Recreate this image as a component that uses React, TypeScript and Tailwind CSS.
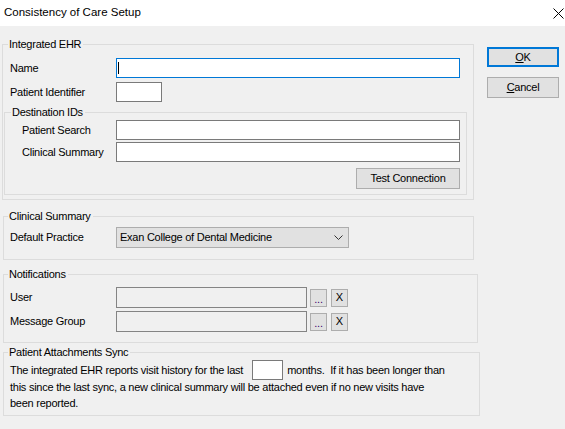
import React from "react";

const Btn = ({ children, className = "" }: { children: React.ReactNode; className?: string }) => (
  <div className={`flex items-center justify-center bg-[#e1e1e1] border border-[#adadad] ${className}`}>{children}</div>
);

export default function App() {
  return (
    <div className="w-[565px] h-[429px] bg-[#f0f0f0] overflow-hidden text-black text-[11px] tracking-[-0.25px] font-['Liberation_Sans',Arial,sans-serif]">
      {/* Title bar */}
      <div className="h-[26px] bg-white flex items-center justify-between">
        <span className="pl-[4px] text-[11.5px] tracking-normal">Consistency of Care Setup</span>
        <svg width="11" height="11" viewBox="0 0 11 11" className="mr-[1px]">
          <path d="M0.5 0.5 L10.5 10.5 M10.5 0.5 L0.5 10.5" stroke="#000" strokeWidth="1" fill="none" />
        </svg>
      </div>

      <div className="flex">
        {/* Left column */}
        <div className="w-[480px] flex flex-col">
          {/* Integrated EHR */}
          <fieldset className="mt-[12px] ml-[2px] w-[472px] border border-[#dcdcdc] pb-[4px]">
            <legend className="ml-[5px] pl-[1px] pr-[2px] leading-[13px]">Integrated EHR</legend>
            <div className="mt-[7px] flex items-center h-[20px]">
              <div className="w-[113px] pl-[7px]">Name</div>
              <div className="w-[344px] h-[20px] bg-white border border-[#0078d7] flex items-center">
                <div className="ml-[1px] w-[1px] h-[12px] bg-black" />
              </div>
            </div>
            <div className="mt-[4px] flex items-center h-[20px]">
              <div className="w-[113px] pl-[7px]">Patient Identifier</div>
              <div className="w-[46px] h-[20px] bg-white border border-[#7a7a7a]" />
            </div>
            <fieldset className="mt-[4px] ml-[1px] w-[463px] border border-[#dcdcdc] pb-[5px]">
              <legend className="ml-[6px] pl-[1px] pr-[2px] leading-[13px]">Destination IDs</legend>
              <div className="mt-[1px] flex items-center h-[20px]">
                <div className="w-[111px] pl-[17px]">Patient Search</div>
                <div className="w-[344px] h-[20px] bg-white border border-[#7a7a7a]" />
              </div>
              <div className="mt-[2px] flex items-center h-[20px]">
                <div className="w-[111px] pl-[17px]">Clinical Summary</div>
                <div className="w-[344px] h-[20px] bg-white border border-[#7a7a7a]" />
              </div>
              <div className="mt-[6px] flex">
                <Btn className="ml-[351px] w-[104px] h-[21px]">Test Connection</Btn>
              </div>
            </fieldset>
          </fieldset>

          {/* Clinical Summary */}
          <fieldset className="mt-[10px] ml-[3px] w-[471px] border border-[#dcdcdc] pb-[11px]">
            <legend className="ml-[4px] pl-[1px] pr-[2px] leading-[13px]">Clinical Summary</legend>
            <div className="mt-[4px] flex items-center h-[21px]">
              <div className="w-[112px] pl-[6px]">Default Practice</div>
              <div className="w-[233px] h-[21px] bg-[#e1e1e1] border border-[#adadad] flex items-center justify-between pl-[3px] pr-[5px]">
                <span>Exan College of Dental Medicine</span>
                <svg width="9" height="5" viewBox="0 0 9 5">
                  <path d="M0.5 0.5 L4.5 4.5 L8.5 0.5" stroke="#333" strokeWidth="1" fill="none" />
                </svg>
              </div>
            </div>
          </fieldset>

          {/* Notifications */}
          <fieldset className="mt-[8px] ml-[3px] w-[475px] border border-[#dcdcdc] pb-[10px]">
            <legend className="ml-[4px] pl-[1px] pr-[2px] leading-[13px]">Notifications</legend>
            <div className="mt-[6px] flex items-center h-[21px]">
              <div className="w-[112px] pl-[6px]">User</div>
              <div className="w-[191px] h-[21px] bg-[#f0f0f0] border border-[#848484]" />
              <Btn className="ml-[3px] w-[17px] h-[18px] text-[#3b0070]"><span className="leading-[12px] pt-[2px]">...</span></Btn>
              <Btn className="ml-[4px] w-[17px] h-[18px] tracking-normal">X</Btn>
            </div>
            <div className="mt-[3px] flex items-center h-[21px]">
              <div className="w-[112px] pl-[6px]">Message Group</div>
              <div className="w-[191px] h-[21px] bg-[#f0f0f0] border border-[#848484]" />
              <Btn className="ml-[3px] w-[17px] h-[18px] text-[#3b0070]"><span className="leading-[12px] pt-[2px]">...</span></Btn>
              <Btn className="ml-[4px] w-[17px] h-[18px] tracking-normal">X</Btn>
            </div>
          </fieldset>

          {/* Patient Attachments Sync */}
          <fieldset className="mt-[3px] ml-[3px] w-[477px] border border-[#dcdcdc] pb-[4px]">
            <legend className="ml-[4px] pl-[1px] pr-[2px] leading-[13px]">Patient Attachments Sync</legend>
            <div className="mt-[1px] pl-[6px] leading-[16px]">
              <div className="flex items-center h-[19px] whitespace-pre">
                <span>The integrated EHR reports visit history for the last</span>
                <div className="ml-[9px] w-[31px] h-[20px] shrink-0 bg-white border border-[#7a7a7a]" />
                <span className="ml-[4px]">months.  If it has been longer than</span>
              </div>
              <div>this since the last sync, a new clinical summary will be attached even if no new visits have</div>
              <div>been reported.</div>
            </div>
          </fieldset>
        </div>

        {/* Right column */}
        <div className="pl-[7px] flex flex-col">
          <div className="mt-[21px] w-[72px] h-[20px] bg-[#e1e1e1] border-2 border-[#0078d7] flex items-center justify-center">
            <span><span className="underline">O</span>K</span>
          </div>
          <Btn className="mt-[10px] w-[72px] h-[21px]">
            <span><span className="underline">C</span>ancel</span>
          </Btn>
        </div>
      </div>
    </div>
  );
}
